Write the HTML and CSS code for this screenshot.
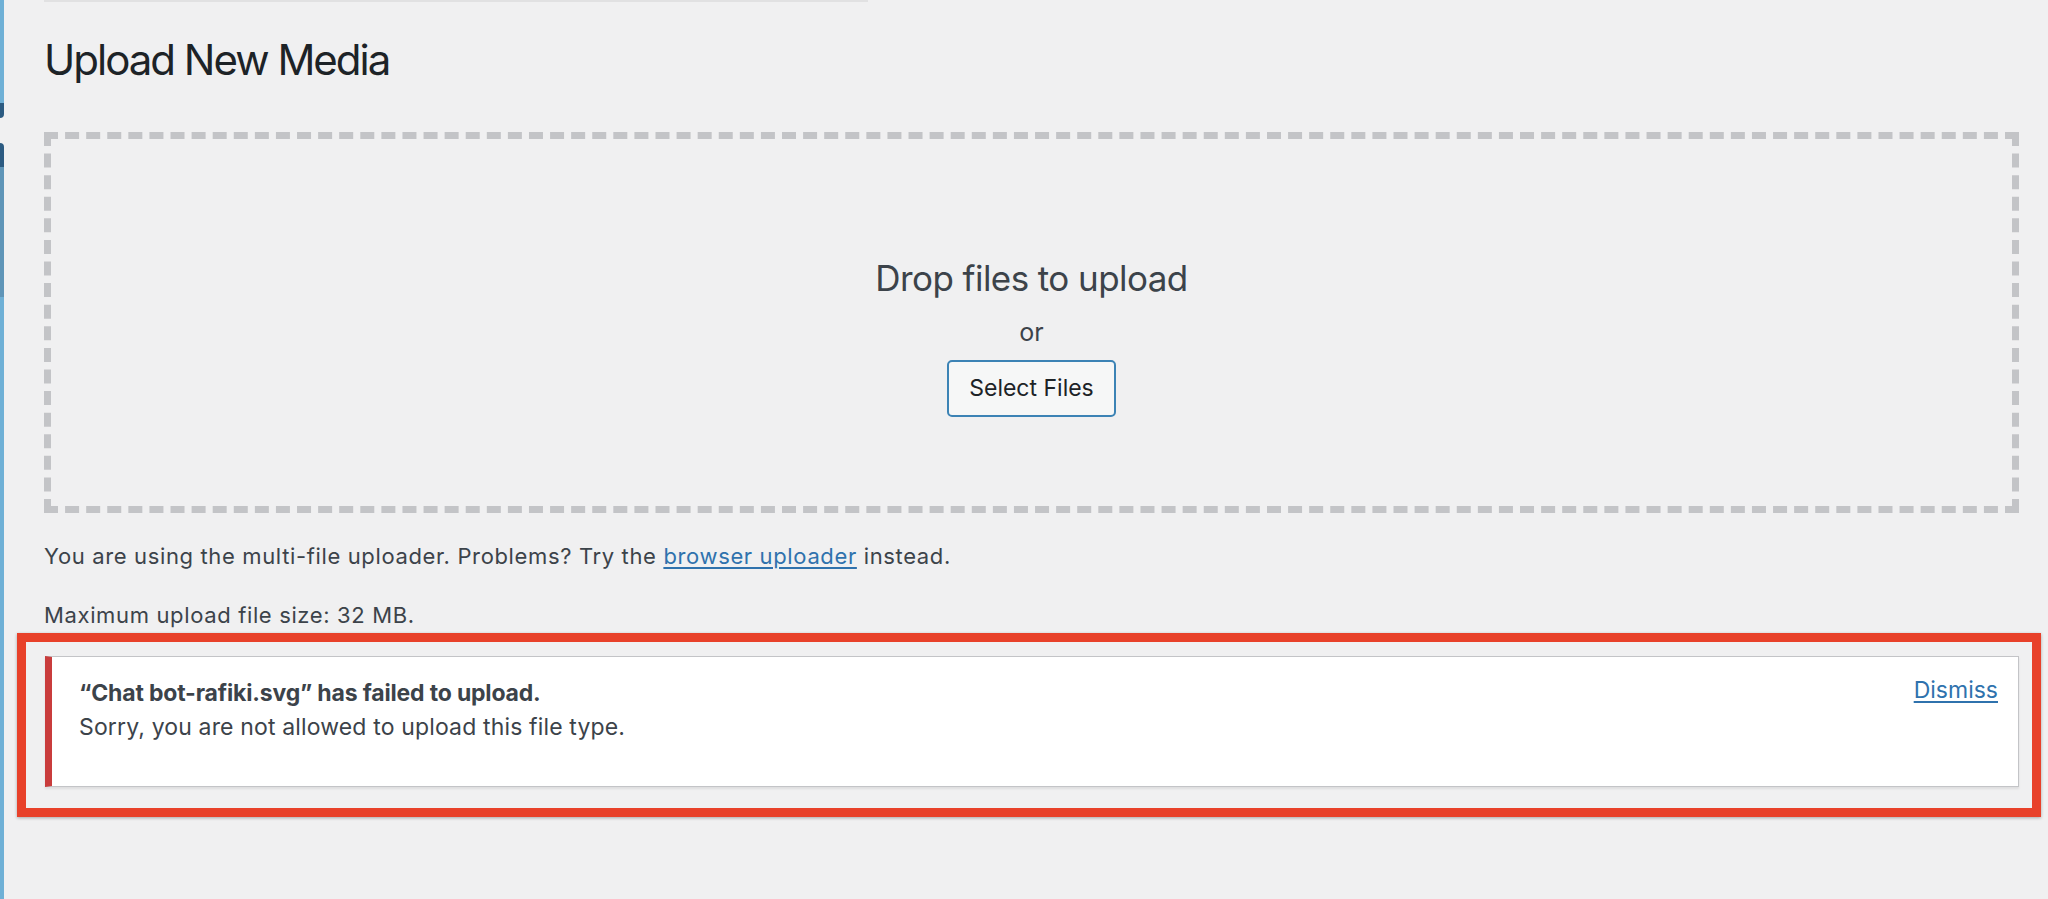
FILE: index.html
```html
<!DOCTYPE html>
<html lang="en">
<head>
<meta charset="utf-8">
<title>Upload New Media</title>
<link rel="stylesheet" href="styles.css">
</head>
<body>
<div class="page">
  <div class="menu-edge">
    <div class="seg seg-light-top"></div>
    <div class="seg seg-dark-a"></div>
    <div class="seg seg-gap"></div>
    <div class="seg seg-dark-b"></div>
    <div class="seg seg-mid"></div>
    <div class="seg seg-light"></div>
  </div>
  <main class="main">
    <div class="topline"></div>
    <h1 class="title">Upload New Media</h1>
    <div class="dropzone">
      <p class="drop-info">Drop files to upload</p>
      <p class="drop-or">or</p>
      <button class="select-btn" type="button">Select Files</button>
    </div>
    <p class="help">You are using the multi-file uploader. Problems? Try the <a href="#" class="link">browser uploader</a> instead.</p>
    <p class="help help-max">Maximum upload file size: 32 MB.</p>
    <div class="annot">
      <div class="notice">
        <div class="notice-text">
          <p class="notice-title">“Chat bot-rafiki.svg” has failed to upload.</p>
          <p class="notice-msg">Sorry, you are not allowed to upload this file type.</p>
        </div>
        <a href="#" class="link dismiss">Dismiss</a>
      </div>
    </div>
  </main>
</div>
</body>
</html>
```
FILE: styles.css
```css
html, body {
  margin: 0;
  padding: 0;
  background: #f0f0f1;
}
body {
  font-family: Inter, "Noto Sans", "Liberation Sans", sans-serif;
  color: #3c434a;
  height: 899px;
  overflow: hidden;
}
.page {
  display: flex;
  height: 899px;
}
.menu-edge {
  width: 4px;
  display: flex;
  flex-direction: column;
  flex: none;
}
.seg { width: 4px; }
.seg-light-top { height: 103px; background: #6fb0d6; }
.seg-dark-a { height: 15px; background: #2c5b82; border-bottom-right-radius: 4px; }
.seg-gap { height: 25px; background: transparent; }
.seg-dark-b { height: 24px; background: #2c5b82; border-top-right-radius: 4px; }
.seg-mid { height: 130px; background: #5f95b8; }
.seg-light { flex: 1; background: #6fb0d6; }

.main {
  flex: 1;
  padding: 0 29px 0 40px;
  display: flex;
  flex-direction: column;
}
.topline {
  width: 824px;
  height: 2px;
  background: #e1e1e2;
}
.title {
  margin: 30px 0 0;
  font-size: 42px;
  line-height: 56px;
  font-weight: 400;
  letter-spacing: -2px;
  color: #1d2327;
}
.dropzone {
  margin-top: 44px;
  height: 381px;
  box-sizing: border-box;
  border: 7px dashed #c3c4c7;
  display: flex;
  flex-direction: column;
  align-items: center;
  padding-top: 117px;
}
.drop-info {
  margin: 0;
  font-size: 35px;
  line-height: 44px;
  letter-spacing: -0.57px;
  color: #3c434a;
}
.drop-or {
  margin: 16px 0 0;
  font-size: 25px;
  line-height: 32px;
  color: #3c434a;
}
.select-btn {
  margin-top: 12px;
  height: 57px;
  box-sizing: border-box;
  border: 2px solid #3c83b5;
  border-radius: 5px;
  background: #f6f7f7;
  padding: 0 20px;
  font-family: inherit;
  font-size: 23px;
  line-height: 53px;
  color: #1d2327;
}
.help {
  margin: 28px 0 0;
  font-size: 22px;
  line-height: 30px;
  letter-spacing: 0.64px;
  color: #3c434a;
}
.help-max {
  margin-top: 29px;
}
.link {
  color: #2f72ad;
  text-decoration: underline;
  text-underline-offset: 3px;
}
.annot {
  margin: 3px -22px 0 -27px;
  border: 9px solid #e8412a;
  padding: 14px 13px 21px 19px;
  box-shadow: 0 1px 3px rgba(0, 0, 0, 0.3);
}
.notice {
  display: flex;
  justify-content: space-between;
  background: #ffffff;
  border: 1px solid #c3c4c7;
  border-left: 7px solid #c93c3c;
  box-shadow: 0 2px 2px rgba(0, 0, 0, 0.08);
  padding: 20px 20px 42px 27px;
}
.notice-text p {
  margin: 0;
  font-size: 23px;
  line-height: 33.5px;
  color: #3c434a;
}
.notice-title {
  font-weight: 700;
  letter-spacing: -0.17px;
}
.notice-msg {
  letter-spacing: 0.15px;
}
.dismiss {
  margin-top: -3px;
  font-size: 23px;
  line-height: 33.5px;
  align-self: flex-start;
}
```
